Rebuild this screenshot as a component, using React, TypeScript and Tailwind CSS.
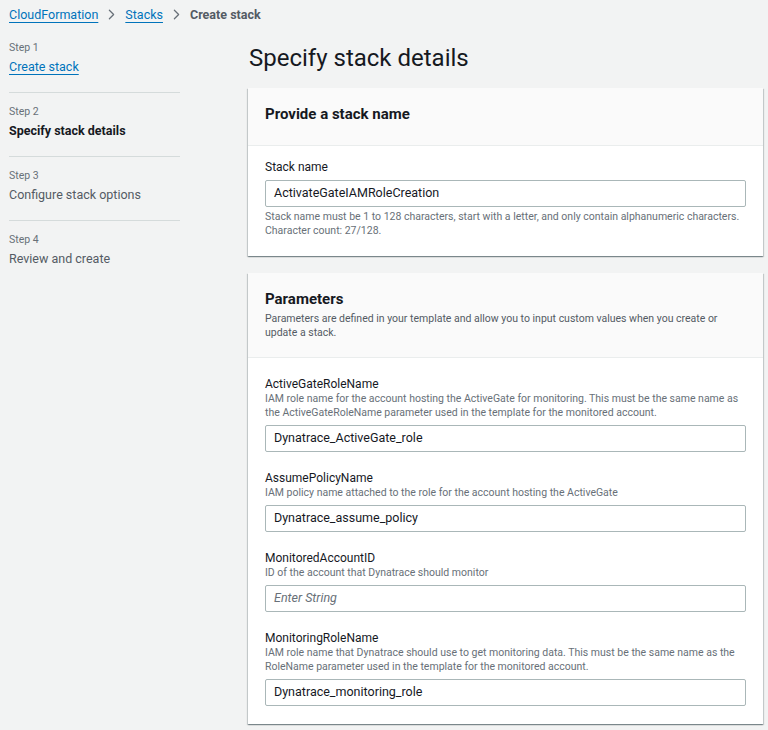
import { ChevronRight } from "lucide-react";

const font = { fontFamily: "Roboto, 'Noto Sans', sans-serif" };

const steps = [
  { step: "Step 1", title: "Create stack", state: "link" },
  { step: "Step 2", title: "Specify stack details", state: "active" },
  { step: "Step 3", title: "Configure stack options", state: "idle" },
  { step: "Step 4", title: "Review and create", state: "idle" },
];

const params = [
  {
    name: "ActiveGateRoleName",
    desc: "IAM role name for the account hosting the ActiveGate for monitoring. This must be the same name as the ActiveGateRoleName parameter used in the template for the monitored account.",
    value: "Dynatrace_ActiveGate_role",
  },
  {
    name: "AssumePolicyName",
    desc: "IAM policy name attached to the role for the account hosting the ActiveGate",
    value: "Dynatrace_assume_policy",
  },
  {
    name: "MonitoredAccountID",
    desc: "ID of the account that Dynatrace should monitor",
    value: "",
  },
  {
    name: "MonitoringRoleName",
    desc: "IAM role name that Dynatrace should use to get monitoring data. This must be the same name as the RoleName parameter used in the template for the monitored account.",
    value: "Dynatrace_monitoring_role",
  },
];

function Field({ value, placeholder }: { value: string; placeholder?: string }) {
  return (
    <div className="flex h-[27px] items-center rounded-[2px] border border-[#aab7b8] bg-white px-[8px] text-[12.5px] text-[#16191f]">
      {value ? (
        <span>{value}</span>
      ) : (
        <span className="italic text-[#687078]">{placeholder}</span>
      )}
    </div>
  );
}

const cardShadow =
  "bg-white shadow-[0_1px_1px_0_rgba(0,28,36,0.3),1px_1px_1px_0_rgba(0,28,36,0.15),-1px_1px_1px_0_rgba(0,28,36,0.15)]";

export default function App() {
  return (
    <div
      className="min-h-[730px] w-[768px] overflow-hidden bg-[#f2f3f3] text-[#16191f]"
      style={font}
    >
      <nav className="flex items-center px-[9px] pt-[6px] text-[12.5px] leading-[16px]">
        <a className="text-[#0073bb] underline underline-offset-[3px]">CloudFormation</a>
        <ChevronRight size={17} strokeWidth={1.75} className="mx-[5px] text-[#687078]" />
        <a className="text-[#0073bb] underline underline-offset-[3px]">Stacks</a>
        <ChevronRight size={17} strokeWidth={1.75} className="mx-[5px] text-[#687078]" />
        <span className="font-bold text-[#545b64]">Create stack</span>
      </nav>

      <div className="flex">
        <aside className="ml-[9px] mt-[18px] w-[171px] shrink-0">
          {steps.map((s, i) => (
            <div
              key={s.step}
              className={i < steps.length - 1 ? "mb-[12px] border-b border-[#d5dbdb] pb-[17px]" : ""}
            >
              <div className="text-[10.5px] leading-[14px] text-[#687078]">{s.step}</div>
              <div
                className={
                  "mt-[4px] text-[12.5px] leading-[16px] " +
                  (s.state === "link"
                    ? "text-[#0073bb] underline underline-offset-[3px]"
                    : s.state === "active"
                    ? "font-bold text-[#16191f]"
                    : "text-[#545b64]")
                }
              >
                {s.title}
              </div>
            </div>
          ))}
        </aside>

        <main className="ml-[68px] w-[515px] shrink-0">
          <h1 className="ml-[1px] mt-[19px] text-[24px] leading-[32px] text-[#16191f]">
            Specify stack details
          </h1>

          <section className={"mt-[14px] " + cardShadow}>
            <div className="border-b border-[#eaeded] bg-[#fafafa] px-[17px] pt-[13px] pb-[18px]">
              <h2 className="text-[15px] font-bold leading-[26px]">Provide a stack name</h2>
            </div>
            <div className="px-[17px] pt-[13px] pb-[18px]">
              <div className="text-[12px] leading-[16px]">Stack name</div>
              <div className="mt-[5px]">
                <Field value="ActivateGateIAMRoleCreation" />
              </div>
              <p className="mt-[3px] text-[10.5px] leading-[14px] text-[#687078]">
                Stack name must be 1 to 128 characters, start with a letter, and only contain alphanumeric characters. Character count: 27/128.
              </p>
            </div>
          </section>

          <section className={"mt-[17px] " + cardShadow}>
            <div className="border-b border-[#eaeded] bg-[#fafafa] px-[17px] pt-[15px] pb-[17px]">
              <h2 className="text-[15px] font-bold leading-[22px]">Parameters</h2>
              <p className="mt-[2px] text-[10.5px] leading-[14px] text-[#545b64]">
                Parameters are defined in your template and allow you to input custom values when you create or update a stack.
              </p>
            </div>
            <div className="px-[17px] pt-[18px] pb-[18px]">
              {params.map((p, i) => (
                <div key={p.name} className={i > 0 ? "mt-[18px]" : ""}>
                  <div className="text-[12px] leading-[16px]">{p.name}</div>
                  <p className="text-[10.5px] leading-[14px] text-[#687078]">{p.desc}</p>
                  <div className="mt-[5px]">
                    <Field value={p.value} placeholder="Enter String" />
                  </div>
                </div>
              ))}
            </div>
          </section>
        </main>
      </div>
    </div>
  );
}
